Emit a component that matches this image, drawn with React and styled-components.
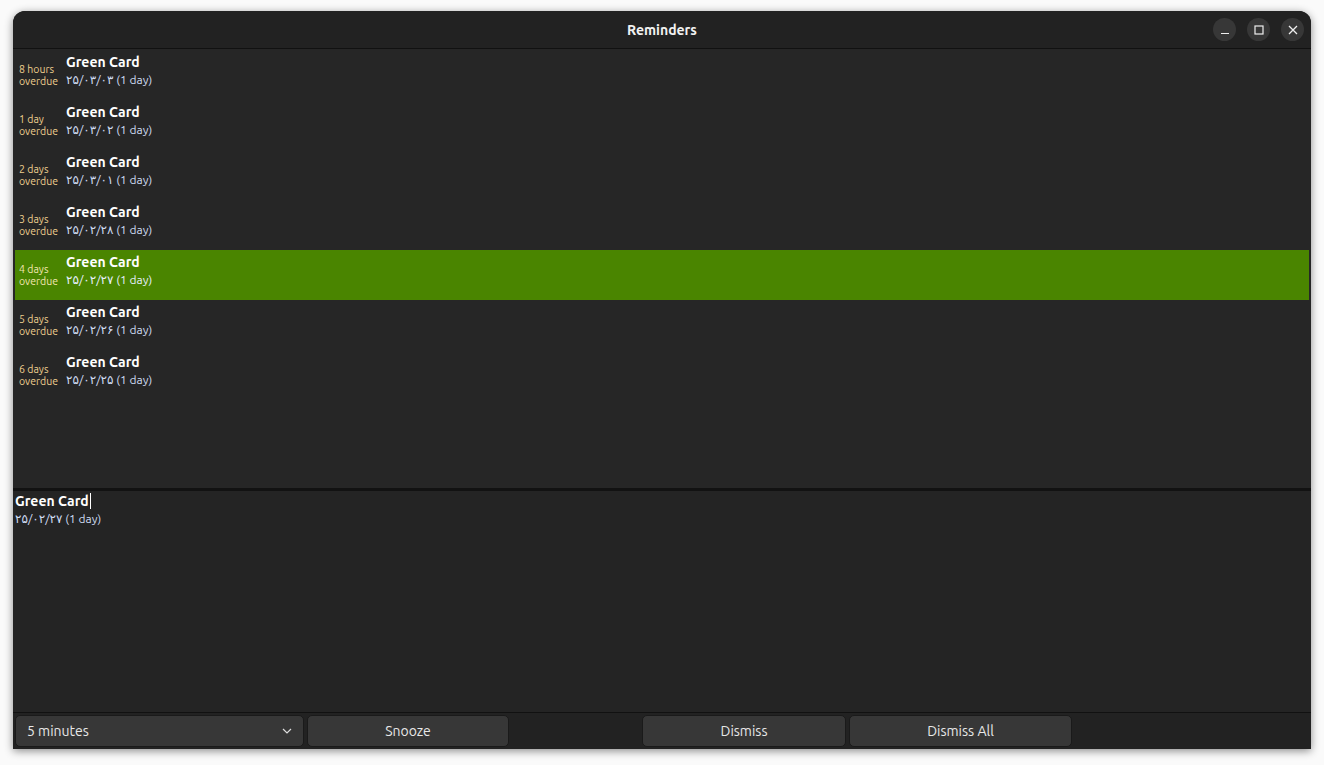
import React from "react";
import styled, { createGlobalStyle } from "styled-components";

const Global = createGlobalStyle`
  body { margin: 0; background: #fafafa; font-family: Ubuntu, "Noto Sans", "DejaVu Sans", sans-serif; }
`;

const Page = styled.div`
  width: 1324px;
  height: 765px;
  padding: 11px 13px 0 13px;
  box-sizing: border-box;
`;

const Window = styled.div`
  width: 1298px;
  height: 738px;
  background: #242424;
  border-radius: 12px 12px 0 0;
  box-shadow: 0 2px 8px rgba(0, 0, 0, 0.45);
  display: flex;
  flex-direction: column;
  overflow: hidden;
`;

const TitleBar = styled.div`
  height: 37px;
  flex: none;
  display: flex;
  align-items: center;
  justify-content: center;
  position: relative;
  background: #222222;
  border-bottom: 1px solid #111;
  color: #f2f2f2;
  font-size: 14px;
  font-weight: bold;
`;

const Controls = styled.div`
  position: absolute;
  right: 7px;
  top: 7px;
  display: flex;
  gap: 11px;
`;

const Ctrl = styled.div`
  width: 23px;
  height: 23px;
  border-radius: 50%;
  background: #373737;
  display: flex;
  align-items: center;
  justify-content: center;
`;

const List = styled.div`
  height: 437px;
  flex: none;
  padding: 1px 2px;
  background: #262626;
`;

const Row = styled.div`
  height: 50px;
  display: flex;
  align-items: flex-start;
  background: ${(p) => (p.$sel ? "#4a8500" : "transparent")};
`;

const Overdue = styled.div`
  width: 47px;
  padding: 13px 0 0 4px;
  font-size: 10.5px;
  line-height: 12px;
  color: ${(p) => (p.$sel ? "#f3e6b0" : "#eecf8f")};
`;

const Texts = styled.div`
  padding-top: 3px;
`;

const Title = styled.div`
  font-size: 14px;
  font-weight: bold;
  color: #ffffff;
  line-height: 18px;
`;

const Sub = styled.div`
  font-size: 12px;
  color: ${(p) => (p.$sel ? "#e6f0ff" : "#cfdcf3")};
  line-height: 18px;
`;

const Divider = styled.div`
  height: 3px;
  flex: none;
  background: #121212;
`;

const Detail = styled.div`
  flex: 1;
  padding: 1px 2px;
  background: #242424;
`;

const Caret = styled.span`
  display: inline-block;
  width: 1px;
  height: 16px;
  background: #fff;
  vertical-align: -3px;
  margin-left: 1px;
`;

const Bottom = styled.div`
  height: 36px;
  flex: none;
  border-top: 1px solid #111;
  background: #222;
  display: flex;
  align-items: center;
  padding: 0 2px;
  gap: 3px;
`;

const Btn = styled.div`
  width: ${(p) => p.$w}px;
  margin-left: ${(p) => p.$ml || 0}px;
  height: 32px;
  box-sizing: border-box;
  border: 1px solid #1a1a1a;
  border-radius: 5px;
  background: #373737;
  color: #e8e8e8;
  font-size: 14px;
  display: flex;
  align-items: center;
  justify-content: ${(p) => (p.$combo ? "space-between" : "center")};
  padding: 0 ${(p) => (p.$combo ? "10px 0 11px" : "0")};
`;

const rows = [
  ["8 hours", "۲۵/۰۳/۰۳"],
  ["1 day", "۲۵/۰۳/۰۲"],
  ["2 days", "۲۵/۰۳/۰۱"],
  ["3 days", "۲۵/۰۲/۲۸"],
  ["4 days", "۲۵/۰۲/۲۷"],
  ["5 days", "۲۵/۰۲/۲۶"],
  ["6 days", "۲۵/۰۲/۲۵"],
];

export default function App() {
  return (
    <Page>
      <Global />
      <Window>
        <TitleBar>
          Reminders
          <Controls>
            <Ctrl>
              <svg width="10" height="10"><path d="M1 8.5h8" stroke="#eee" strokeWidth="1.2" /></svg>
            </Ctrl>
            <Ctrl>
              <svg width="10" height="10"><rect x="1" y="1" width="8" height="8" fill="none" stroke="#eee" strokeWidth="1.2" /></svg>
            </Ctrl>
            <Ctrl>
              <svg width="10" height="10"><path d="M1 1l8 8M9 1l-8 8" stroke="#eee" strokeWidth="1.3" /></svg>
            </Ctrl>
          </Controls>
        </TitleBar>
        <List>
          {rows.map(([o, d], i) => (
            <Row key={i} $sel={i === 4}>
              <Overdue $sel={i === 4}>{o}<br />overdue</Overdue>
              <Texts>
                <Title>Green Card</Title>
                <Sub $sel={i === 4}>{d} (1 day)</Sub>
              </Texts>
            </Row>
          ))}
        </List>
        <Divider />
        <Detail>
          <Title>Green Card<Caret /></Title>
          <Sub>۲۵/۰۲/۲۷ (1 day)</Sub>
        </Detail>
        <Bottom>
          <Btn $w={289} $combo>
            5 minutes
            <svg width="12" height="12"><path d="M2 4l4 4 4-4" fill="none" stroke="#ddd" strokeWidth="1.2" /></svg>
          </Btn>
          <Btn $w={202}>Snooze</Btn>
          <Btn $w={204} $ml={130}>Dismiss</Btn>
          <Btn $w={223}>Dismiss All</Btn>
        </Bottom>
      </Window>
    </Page>
  );
}
